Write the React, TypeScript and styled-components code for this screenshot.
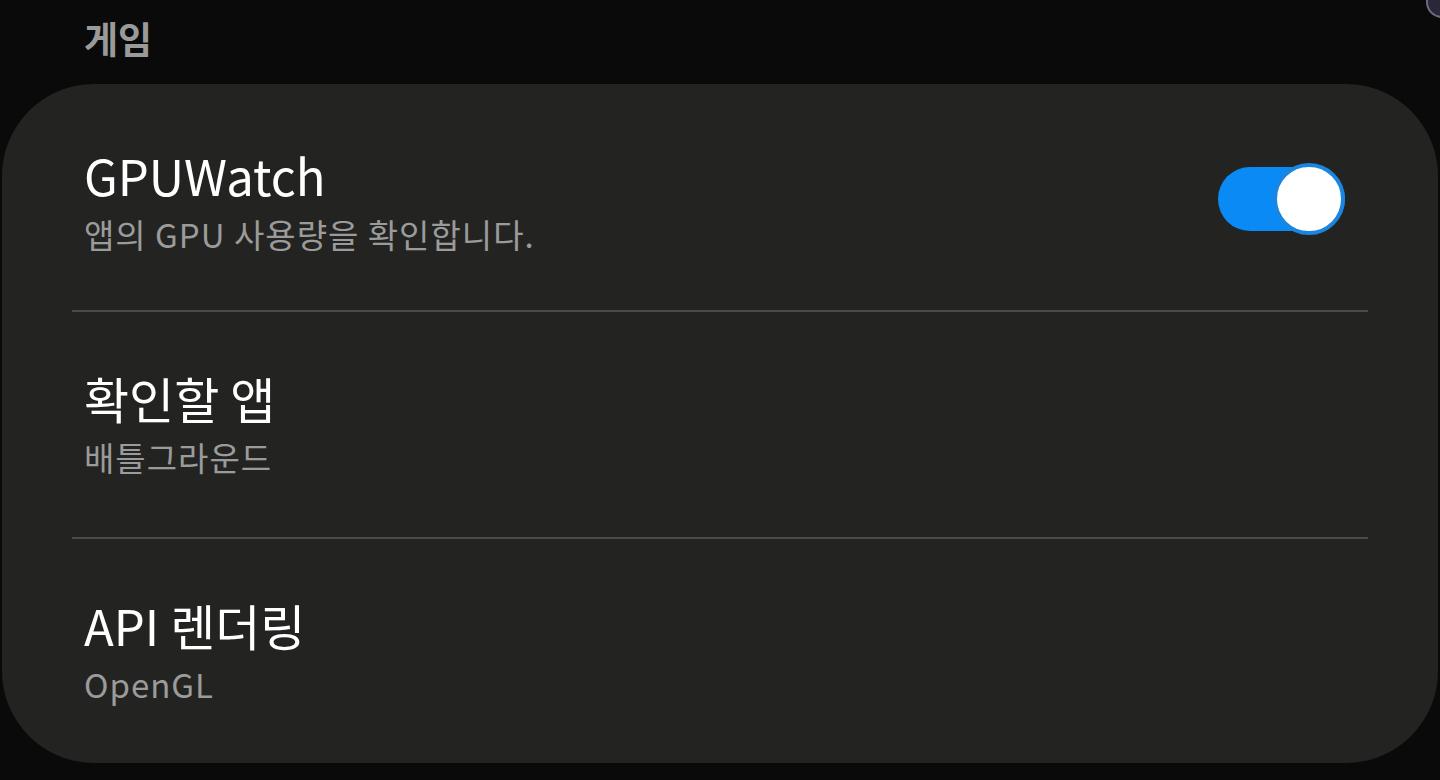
import { FC } from 'react';
import styled, { createGlobalStyle } from 'styled-components';

const GlobalStyle = createGlobalStyle`
    html, body {
        margin: 0;
        padding: 0;
        background: #0a0a0a;
    }
    body {
        font-family: "Noto Sans CJK KR", "Noto Sans", sans-serif;
    }
`;

interface SettingItem {
    title: string;
    summary: string;
    toggle?: boolean;
}

const items: SettingItem[] = [
    { title: 'GPUWatch', summary: '앱의 GPU 사용량을 확인합니다.', toggle: true },
    { title: '확인할 앱', summary: '배틀그라운드' },
    { title: 'API 렌더링', summary: 'OpenGL' },
];

const App: FC = () => {
    return (
        <>
            <GlobalStyle />
            <Screen>
                <Corner />
                <SectionHeader>게임</SectionHeader>
                <Card>
                    {items.map((item, i) => (
                        <div key={item.title}>
                            {i > 0 && <Divider />}
                            <Row $first={i === 0}>
                                <TextBlock>
                                    <Title>{item.title}</Title>
                                    <Summary>{item.summary}</Summary>
                                </TextBlock>
                                {item.toggle && (
                                    <Switch>
                                        <Thumb />
                                    </Switch>
                                )}
                            </Row>
                        </div>
                    ))}
                </Card>
            </Screen>
        </>
    );
};

export default App;

const Screen = styled.div`
    position: relative;
    width: 1440px;
    height: 780px;
    overflow: hidden;
    background: #0a0a0a;
`;

const Corner = styled.div`
    position: absolute;
    top: -14px;
    right: -18px;
    width: 28px;
    height: 28px;
    border-radius: 50%;
    background: #2a2838;
    border: 2px solid #6e6a86;
`;

const SectionHeader = styled.div`
    height: 84px;
    padding-left: 84px;
    box-sizing: border-box;
    display: flex;
    align-items: center;
    padding-bottom: 8px;
    font-size: 37px;
    font-weight: 600;
    color: #9a9a9a;
`;

const Card = styled.div`
    margin: 0 2px;
    height: 679px;
    background: #232422;
    border-radius: 92px;
    overflow: hidden;
`;

const Row = styled.div<{ $first?: boolean }>`
    display: flex;
    align-items: flex-start;
    justify-content: space-between;
    height: ${p => (p.$first ? 226 : 225)}px;
    box-sizing: border-box;
    padding: ${p => (p.$first ? 62 : 57)}px 93px 0 82px;
`;

const TextBlock = styled.div`
    display: flex;
    flex-direction: column;
`;

const Title = styled.div`
    font-size: 49px;
    line-height: 58px;
    font-weight: 400;
    color: #ffffff;
`;

const Summary = styled.div`
    margin-top: 8px;
    font-size: 33px;
    line-height: 44px;
    letter-spacing: 1px;
    color: #9b9b9b;
`;

const Divider = styled.div`
    height: 2px;
    margin: 0 70px;
    background: #4a4a4a;
`;

const Switch = styled.div`
    position: relative;
    width: 127px;
    height: 64px;
    margin-top: 21px;
    border-radius: 32px;
    background: #0a8af5;
`;

const Thumb = styled.div`
    position: absolute;
    top: -4px;
    right: 0;
    width: 64px;
    height: 64px;
    border-radius: 50%;
    background: #ffffff;
    border: 4px solid #1a86e0;
`;
